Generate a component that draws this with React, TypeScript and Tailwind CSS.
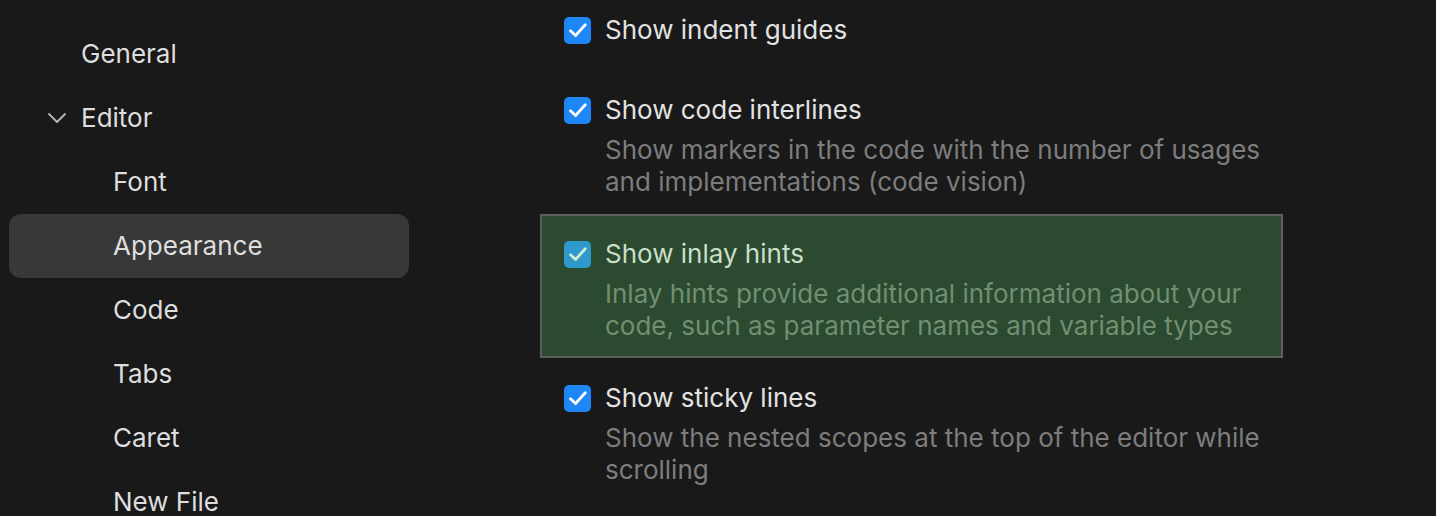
import React from "react";

function Check({ tinted }: { tinted?: boolean }) {
  return (
    <div
      className={
        "flex h-[27px] w-[27px] shrink-0 items-center justify-center rounded-[5px] " +
        (tinted ? "bg-[#2e99cc]" : "bg-[#1f87f5]")
      }
    >
      <svg width="22" height="22" viewBox="0 0 20 20" fill="none">
        <path
          d="M3.2 10.6 L7.8 15 L16.6 5.2"
          stroke={tinted ? "#d2ecd2" : "#ffffff"}
          strokeWidth="2.5"
          strokeLinecap="round"
          strokeLinejoin="round"
        />
      </svg>
    </div>
  );
}

function Row({
  label,
  desc,
  highlighted,
  className,
}: {
  label: string;
  desc?: string[];
  highlighted?: boolean;
  className?: string;
}) {
  return (
    <div
      className={
        "border-2 pl-[22px] pr-4 " +
        (highlighted ? "border-[#5c5f5c] bg-[#2b4a2f] " : "border-transparent ") +
        (className ?? "")
      }
    >
      <div className="flex h-[32px] items-center gap-[14px]">
        <Check tinted={highlighted} />
        <span className={highlighted ? "text-[#c9dfc9]" : "text-[#e2e2e2]"}>{label}</span>
      </div>
      {desc && (
        <div className={"mt-2 pl-[41px] " + (highlighted ? "text-[#728f73]" : "text-[#7d7d7d]")}>
          {desc.map((d) => (
            <div key={d} className="h-[32px] whitespace-nowrap leading-[32px]">
              {d}
            </div>
          ))}
        </div>
      )}
    </div>
  );
}

export default function App() {
  const sub = ["Font", "Appearance", "Code", "Tabs", "Caret", "New File"];
  return (
    <div
      className="flex h-[516px] w-[1436px] overflow-hidden bg-[#191919] text-[26px] leading-[32px] text-[#dedede]"
      style={{ fontFamily: "Inter, 'Noto Sans', sans-serif" }}
    >
      <div className="w-[540px] shrink-0 pl-[9px] pt-[22px]">
        <div className="flex h-[64px] w-[400px] items-center pl-[72px]">General</div>
        <div className="flex h-[64px] w-[400px] items-center pl-[38px]">
          <svg width="20" height="12" viewBox="0 0 20 12" fill="none" className="mr-[14px]">
            <path d="M2 2 L10 10 L18 2" stroke="#b8b8b8" strokeWidth="1.8" strokeLinecap="round" strokeLinejoin="round" />
          </svg>
          Editor
        </div>
        {sub.map((s) => (
          <div
            key={s}
            className={
              "flex h-[64px] w-[400px] items-center rounded-[12px] pl-[104px] " +
              (s === "Appearance" ? "bg-[#383838]" : "")
            }
          >
            {s}
          </div>
        ))}
      </div>
      <div className="flex w-[743px] shrink-0 flex-col">
        <Row label="Show indent guides" className="pb-[22px] pt-[12px]" />
        <Row
          label="Show code interlines"
          desc={["Show markers in the code with the number of usages", "and implementations (code vision)"]}
          className="pb-[14px] pt-[22px]"
        />
        <Row
          label="Show inlay hints"
          desc={["Inlay hints provide additional information about your", "code, such as parameter names and variable types"]}
          highlighted
          className="pb-[14px] pt-[22px]"
        />
        <Row
          label="Show sticky lines"
          desc={["Show the nested scopes at the top of the editor while", "scrolling"]}
          className="pb-[14px] pt-[22px]"
        />
      </div>
    </div>
  );
}
